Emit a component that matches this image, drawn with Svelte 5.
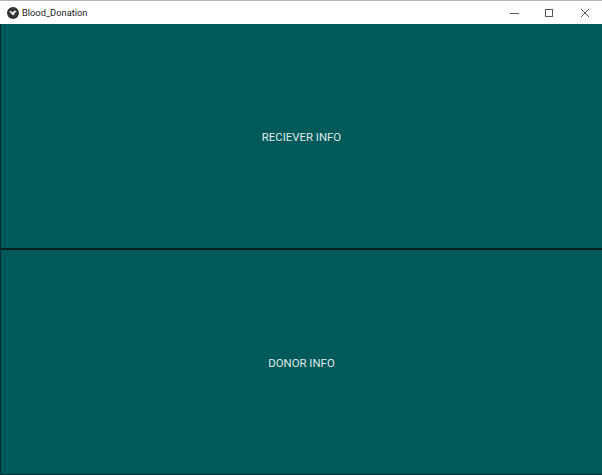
<script>
  let sections = ['RECIEVER INFO', 'DONOR INFO'];
</script>

<div class="window">
  <div class="titlebar">
    <svg class="logo" width="12" height="12" viewBox="0 0 12 12">
      <circle cx="6" cy="6" r="6" fill="#333" />
      <path d="M2.2 4 L4.4 4.2 L5.6 5.6 L7.2 3.4 L9.8 4 L8 5.8 L6.6 8.6 L4.4 7 Z" fill="#eee" />
    </svg>
    <span class="title">Blood_Donation</span>
    <div class="controls">
      <svg width="36" height="14" viewBox="0 0 36 14"><path d="M15 7.5 H24" stroke="#555" fill="none" /></svg>
      <svg width="36" height="14" viewBox="0 0 36 14"><rect x="14.5" y="3.5" width="7" height="7" stroke="#555" fill="none" /></svg>
      <svg width="36" height="14" viewBox="0 0 36 14"><path d="M14 3 L22 11 M22 3 L14 11" stroke="#555" fill="none" /></svg>
    </div>
  </div>
  <div class="content">
    {#each sections as label}
      <button class="section">{label}</button>
    {/each}
  </div>
</div>

<style>
:global(body) {
  margin: 0;
}

.window {
  width: 602px;
  height: 475px;
  display: flex;
  flex-direction: column;
  box-sizing: border-box;
  border-top: 1px solid #b5b5b5;
  background: #fff;
  overflow: hidden;
}

.titlebar {
  height: 23px;
  flex: none;
  display: flex;
  align-items: center;
  padding-left: 7px;
  font-family: Roboto, 'Open Sans', sans-serif;
  font-size: 9.3px;
  color: #222;
}

.logo {
  margin-right: 3px;
}

.title {
  flex: 1;
}

.controls {
  display: flex;
  align-items: center;
  margin-right: -1px;
}

.content {
  flex: 1;
  display: flex;
  flex-direction: column;
  background: #02201f;
  gap: 2px;
  border-left: 1px solid #0a2f2d;
  border-bottom: 1px solid #0a2f2d;
}

.section {
  flex: 1;
  border: none;
  padding: 2px 0 0;
  background: #005a5a;
  color: #dfeaea;
  font-family: Roboto, 'Liberation Sans', sans-serif;
  font-size: 11.4px;
}
</style>
